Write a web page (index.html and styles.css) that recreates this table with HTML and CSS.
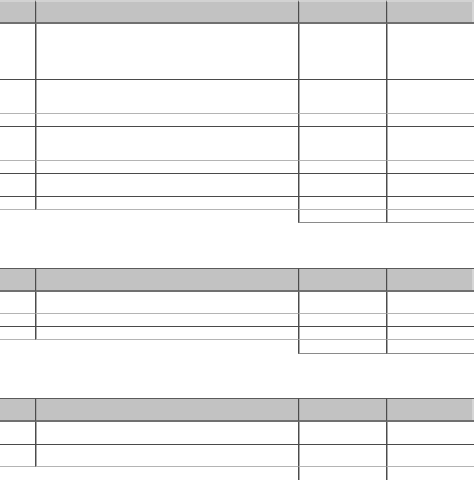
FILE: index.html
```html
<!DOCTYPE html>
<html>
<head>
<meta charset="utf-8">
<link rel="stylesheet" href="styles.css">
</head>
<body>
<table class="t t1">
  <colgroup><col class="c1"><col class="c2"><col class="c3"><col class="c4"></colgroup>
  <tr class="head"><th></th><th></th><th></th><th></th></tr>
  <tr class="d h55"><td></td><td></td><td></td><td></td></tr>
  <tr class="l h33"><td></td><td></td><td></td><td></td></tr>
  <tr class="d h12"><td></td><td></td><td></td><td></td></tr>
  <tr class="l h33"><td></td><td></td><td></td><td></td></tr>
  <tr class="d h12"><td></td><td></td><td></td><td></td></tr>
  <tr class="d h22"><td></td><td></td><td></td><td></td></tr>
  <tr class="l h12"><td></td><td></td><td></td><td></td></tr>
  <tr class="foot h12"><td></td><td></td><td></td><td></td></tr>
</table>

<table class="t t2">
  <colgroup><col class="c1"><col class="c2"><col class="c3"><col class="c4"></colgroup>
  <tr class="head"><th></th><th></th><th></th><th></th></tr>
  <tr class="l h21"><td></td><td></td><td></td><td></td></tr>
  <tr class="d h12"><td></td><td></td><td></td><td></td></tr>
  <tr class="l h12"><td></td><td></td><td></td><td></td></tr>
  <tr class="foot h13"><td></td><td></td><td></td><td></td></tr>
</table>

<table class="t t3">
  <colgroup><col class="c1"><col class="c2"><col class="c3"><col class="c4"></colgroup>
  <tr class="head"><th></th><th></th><th></th><th></th></tr>
  <tr class="d h22"><td></td><td></td><td></td><td></td></tr>
  <tr class="l h21"><td></td><td></td><td></td><td></td></tr>
  <tr class="foot open h20"><td></td><td></td><td></td><td></td></tr>
</table>
</body>
</html>
```

FILE: styles.css
```css
html, body {
  margin: 0;
  padding: 0;
  background: #ffffff;
}

body {
  width: 474px;
  font-family: "Liberation Sans", Arial, sans-serif;
}

.t {
  border-collapse: separate;
  border-spacing: 0;
  table-layout: fixed;
  width: 474px;
  font-size: 0;
  line-height: 0;
}

.c1 { width: 35px; }
.c2 { width: 263px; }
.c3 { width: 88px; }
.c4 { width: 88px; }

.t th,
.t td {
  padding: 0;
  border-left: 1px solid #4c4c4c;
  box-shadow: inset 1px 0 0 #a8a8a8;
}

.t th:first-child,
.t td:first-child {
  border-left: 0;
  box-shadow: none;
}

.head th {
  background: #c2c2c2;
  height: 21px;
  border-top: 1px solid #5a5a5a;
  border-bottom: 2px solid #707070;
}

.t1 .head th {
  height: 20px;
  border-top: 2px solid #d2d2d2;
}

.head th:last-child {
  box-shadow: inset 1px 0 0 #a8a8a8, inset -2px 0 0 #d6d6d6;
}

.d td { border-bottom: 1px solid #4a4a4a; }
.l td { border-bottom: 1px solid #b4b4b4; }

.foot td { border-bottom: 1px solid #8a8a8a; }
.foot td:nth-child(1),
.foot td:nth-child(2) {
  border-left: 0;
  border-bottom: 0;
  box-shadow: none;
}
.foot.open td { border-bottom: 0; }

.h55 td { height: 55px; }
.h33 td { height: 33px; }
.h22 td { height: 22px; }
.h21 td { height: 21px; }
.h20 td { height: 20px; }
.h13 td { height: 13px; }
.h12 td { height: 12px; }

.t2 { margin-top: 45px; }
.t3 { margin-top: 44px; }
```
